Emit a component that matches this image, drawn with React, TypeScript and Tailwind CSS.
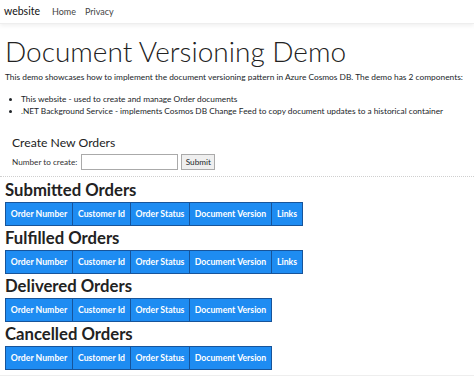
import { useState } from 'react';

const SECTIONS: Array<{ title: string; links: boolean }> = [
  { title: 'Submitted Orders', links: true },
  { title: 'Fulfilled Orders', links: true },
  { title: 'Delivered Orders', links: false },
  { title: 'Cancelled Orders', links: false },
];

const COLUMNS: Array<{ label: string; width: string }> = [
  { label: 'Order Number', width: 'w-[67px]' },
  { label: 'Customer Id', width: 'w-[58px]' },
  { label: 'Order Status', width: 'w-[59px]' },
  { label: 'Document Version', width: 'w-[82px]' },
];

function OrdersTable({ links }: { links: boolean }) {
  return (
    <table className="border-collapse">
      <thead>
        <tr className="h-[23px] bg-[#1e8cf2] text-[8.7px] font-bold text-white">
          {COLUMNS.map((col) => (
            <th key={col.label} className={`${col.width} whitespace-nowrap border border-[#17549a] px-0 text-center`}>
              {col.label}
            </th>
          ))}
          {links ? <th className="w-[31px] border border-[#17549a] text-center">Links</th> : null}
        </tr>
      </thead>
    </table>
  );
}

export default function App() {
  const [count, setCount] = useState('');

  return (
    <div className="min-h-[381px] bg-white text-[#212529]" style={{ fontFamily: 'Lato, "Open Sans", sans-serif' }}>
      <nav className="flex h-[24px] items-center gap-[12px] border-b border-[#eeeeee] px-[4px] shadow-[0_2px_4px_rgba(0,0,0,0.06)]">
        <span className="text-[10.5px] text-[#111]">website</span>
        <span className="text-[9px] text-[#444]">Home</span>
        <span className="-ml-[3px] text-[9px] text-[#444]">Privacy</span>
      </nav>

      <main className="px-[5px]">
        <h1 className="mt-[10px] text-[28px] font-light leading-[34px] text-[#222]">Document Versioning Demo</h1>
        <p className="mt-[3px] whitespace-nowrap text-[8.35px] leading-[12px]">
          This demo showcases how to implement the document versioning pattern in Azure Cosmos DB. The demo has 2 components:
        </p>
        <ul className="mt-[10px] list-disc pl-[16px] text-[8.3px] leading-[12px]">
          <li>This website - used to create and manage Order documents</li>
          <li>.NET Background Service - implements Cosmos DB Change Feed to copy document updates to a historical container</li>
        </ul>

        <div className="mt-[17px] px-[7px]">
          <h4 className="text-[12.2px] leading-[18px] text-[#222]">Create New Orders</h4>
          <div className="mt-[2px] flex items-center gap-[4px] text-[8.2px]">
            <span className="text-[#333]">Number to create:</span>
            <input
              value={count}
              onChange={(e) => setCount(e.target.value)}
              className="h-[16px] w-[97px] border border-[#aaa] bg-white px-1 outline-none"
            />
            <button type="button" className="-ml-[1px] h-[16px] w-[34px] border border-[#aaa] bg-[#efefef] text-[8.2px]">
              Submit
            </button>
          </div>
        </div>
      </main>

      <div className="mt-[6px] border-t border-dotted border-[#cfcfcf]" />

      <div className="px-[5px] pb-[5px] pt-[1px]">
        {SECTIONS.map((section) => (
          <section key={section.title}>
            <h2 className="h-[24px] text-[16.7px] font-bold leading-[25px] text-[#222]">{section.title}</h2>
            <OrdersTable links={section.links} />
          </section>
        ))}
      </div>
      <div className="border-t border-[#eeeeee]" />
    </div>
  );
}
